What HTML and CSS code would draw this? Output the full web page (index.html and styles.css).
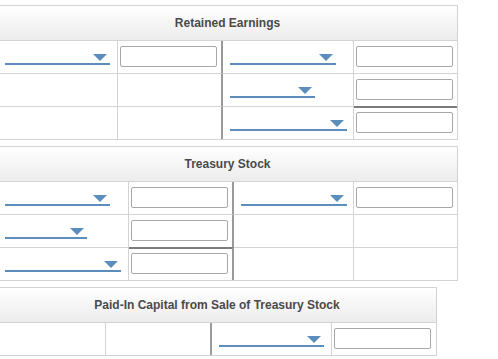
FILE: index.html
```html
<!DOCTYPE html>
<html lang="en">
<head>
<meta charset="utf-8">
<title>T-Accounts</title>
<link rel="stylesheet" href="styles.css">
</head>
<body>
<main class="accounts">

  <section class="ledger ledger--retained">
    <h2 class="ledger__title">Retained Earnings</h2>

    <div class="cell cell--acct"><span class="pick" style="width:105px"></span></div>
    <div class="cell cell--amt"><input class="amount" type="text"></div>
    <div class="cell cell--acct"><span class="pick" style="width:106px"></span></div>
    <div class="cell cell--amt cell--last"><input class="amount" type="text"></div>

    <div class="cell cell--acct"></div>
    <div class="cell cell--amt"></div>
    <div class="cell cell--acct"><span class="pick" style="width:85px"></span></div>
    <div class="cell cell--amt cell--last cell--total"><input class="amount" type="text"></div>

    <div class="cell cell--acct cell--end"></div>
    <div class="cell cell--amt cell--end"></div>
    <div class="cell cell--acct cell--end"><span class="pick" style="width:117px"></span></div>
    <div class="cell cell--amt cell--last cell--end"><input class="amount" type="text"></div>
  </section>

  <section class="ledger ledger--treasury">
    <h2 class="ledger__title">Treasury Stock</h2>

    <div class="cell cell--acct"><span class="pick" style="width:105px"></span></div>
    <div class="cell cell--amt"><input class="amount" type="text"></div>
    <div class="cell cell--acct"><span class="pick" style="width:106px"></span></div>
    <div class="cell cell--amt cell--last"><input class="amount" type="text"></div>

    <div class="cell cell--acct"><span class="pick" style="width:82px"></span></div>
    <div class="cell cell--amt cell--total"><input class="amount" type="text"></div>
    <div class="cell cell--acct"></div>
    <div class="cell cell--amt cell--last"></div>

    <div class="cell cell--acct cell--end"><span class="pick" style="width:116px"></span></div>
    <div class="cell cell--amt cell--end"><input class="amount" type="text"></div>
    <div class="cell cell--acct cell--end"></div>
    <div class="cell cell--amt cell--last cell--end"></div>
  </section>

  <section class="ledger ledger--paidin">
    <h2 class="ledger__title">Paid-In Capital from Sale of Treasury Stock</h2>

    <div class="cell cell--acct cell--end"></div>
    <div class="cell cell--amt cell--end"></div>
    <div class="cell cell--acct cell--end"><span class="pick" style="width:105px"></span></div>
    <div class="cell cell--amt cell--last cell--end"><input class="amount" type="text"></div>
  </section>

</main>
</body>
</html>
```

FILE: styles.css
```css
html, body {
  margin: 0;
  padding: 0;
  background: #fff;
}

body {
  font-family: "Liberation Sans", Arial, sans-serif;
  color: #444;
  overflow: hidden;
}

.accounts {
  display: flex;
  flex-direction: column;
  align-items: flex-start;
  gap: 6px;
  padding-top: 5px;
}

/* one T-account: debit side (acct + amount) | credit side (acct + amount) */
.ledger {
  display: grid;
  border: 1px solid #d3d3d3;
  margin-left: -3px;
}

.ledger--retained { grid-template-columns: 120px 105px 131px 103px; }
.ledger--treasury { grid-template-columns: 131px 105px 120px 103px; }
.ledger--paidin   { grid-template-columns: 108px 106px 120px 104px; }

.ledger__title {
  grid-column: 1 / -1;
  margin: 0;
  height: 34px;
  display: flex;
  align-items: center;
  justify-content: center;
  font-size: 12px;
  font-weight: bold;
  color: #4a4a4a;
  background: linear-gradient(#ffffff, #ececec);
  border-bottom: 1px solid #d3d3d3;
}

.cell {
  box-sizing: border-box;
  height: 33px;
  border-right: 1px solid #d3d3d3;
  border-bottom: 1px solid #d3d3d3;
}

.cell--end { border-bottom: none; height: 32px; }
.cell--last { border-right: none; }

/* the T-account's centre line, right of the debit amounts */
.ledger .cell:nth-of-type(4n+2) { border-right: 2px solid #9a9a9a; }

/* rule above a balance */
.cell--total {
  border-bottom-color: #7c7c7c;
  box-shadow: 0 1px 0 #7c7c7c;
}

.cell--acct {
  padding: 13px 0 0 7px;
}

.cell--amt {
  padding: 5px 0 0 2px;
}

/* account picker: underline with a drop arrow */
.pick {
  position: relative;
  display: block;
  height: 9px;
  border-bottom: 2px solid #5b8ebd;
}

.pick::after {
  content: "";
  position: absolute;
  right: 3px;
  top: 0;
  border-left: 7px solid transparent;
  border-right: 7px solid transparent;
  border-top: 7px solid #5b8ebd;
}

.amount {
  box-sizing: border-box;
  display: block;
  width: 97px;
  height: 21px;
  margin: 0;
  padding: 2px 4px;
  border: 1px solid #a8a8a8;
  border-radius: 2px;
  background: #fff;
  font: 12px "Liberation Sans", Arial, sans-serif;
}
```
